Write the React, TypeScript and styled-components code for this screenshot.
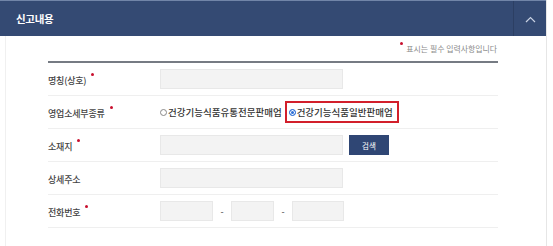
import styled, { createGlobalStyle } from 'styled-components';

const GlobalStyle = createGlobalStyle`
  html, body {
    margin: 0;
    padding: 0;
    background: #fff;
  }
  body {
    font-family: "Noto Sans CJK KR", "Noto Sans", sans-serif;
  }
`;

export default function App() {
  return (
    <>
      <GlobalStyle />
      <Card>
        <Header>
          <Title>신고내용</Title>
          <Toggle>
            <svg width="11" height="7" viewBox="0 0 11 7">
              <path d="M1 6 L5.5 1.5 L10 6" fill="none" stroke="#c9d2e3" strokeWidth="1.2" />
            </svg>
          </Toggle>
        </Header>
        <Body>
          <Note>
            <Star $note />표시는 필수 입력사항입니다
          </Note>
          <Table>
            <Row>
              <Label>명칭(상호)<Star /></Label>
              <Field>
                <Input $w={183} />
              </Field>
            </Row>
            <Row>
              <Label>영업소세부종류<Star /></Label>
              <Field>
                <Radio>
                  <Dot />건강기능식품유통전문판매업
                </Radio>
                <Radio $checked>
                  <Dot $checked />건강기능식품일반판매업
                </Radio>
              </Field>
            </Row>
            <Row>
              <Label>소재지<Star /></Label>
              <Field>
                <Input $w={183} />
                <SearchButton>검색</SearchButton>
              </Field>
            </Row>
            <Row>
              <Label>상세주소</Label>
              <Field>
                <Input $w={183} />
              </Field>
            </Row>
            <Row>
              <Label>전화번호<Star /></Label>
              <Field>
                <Input $w={53} />
                <Dash>-</Dash>
                <Input $w={43} />
                <Dash>-</Dash>
                <Input $w={52} />
              </Field>
            </Row>
          </Table>
        </Body>
      </Card>
    </>
  );
}

const Card = styled.div`
  width: 547px;
  height: 246px;
  border-right: 1px solid #e6e6e6;
  box-sizing: border-box;
`;

const Header = styled.div`
  display: flex;
  align-items: stretch;
  height: 36px;
  background: #344a73;
  border-top: 1px solid #7185a8;
  box-sizing: border-box;
`;

const Title = styled.h2`
  flex: 1;
  margin: 0;
  padding-left: 16px;
  display: flex;
  align-items: center;
  color: #fff;
  font-size: 10.5px;
  font-weight: 700;
  letter-spacing: -0.3px;
`;

const Toggle = styled.div`
  width: 32px;
  display: flex;
  align-items: center;
  justify-content: center;
  border-left: 1px solid #2c3f63;
  padding-top: 1px;
`;

const Body = styled.div`
  margin-left: 5px;
  border-left: 1px solid #f0f0f0;
  padding: 0 48px 0 42px;
  height: 210px;
  box-sizing: border-box;
`;

const Note = styled.div`
  height: 25px;
  display: flex;
  align-items: center;
  justify-content: flex-end;
  padding-right: 1px;
  font-size: 7.9px;
  color: #8a8a8a;
`;

const Star = styled.span<{ $note?: boolean }>`
  display: inline-block;
  width: 3px;
  height: 3px;
  border-radius: 50%;
  background: #c8102e;
  margin: ${(p) => (p.$note ? '0 3px 0 0' : '0 0 0 5px')};
  position: relative;
  top: ${(p) => (p.$note ? '-5px' : '-8px')};
`;

const Table = styled.div`
  border-top: 2px solid #767b83;
`;

const Row = styled.div`
  display: flex;
  align-items: center;
  height: 33px;
  border-bottom: 1px solid #efefef;
  box-sizing: border-box;
`;

const Label = styled.div`
  width: 112px;
  flex-shrink: 0;
  font-size: 9px;
  font-weight: 500;
  color: #444;
  letter-spacing: -0.2px;
  padding-top: 2px;
`;

const Field = styled.div`
  display: flex;
  align-items: center;
`;

const Input = styled.div<{ $w: number }>`
  width: ${(p) => p.$w}px;
  height: 20px;
  background: #f3f3f3;
  border: 1px solid #e8e8e8;
  box-sizing: border-box;
`;

const Dash = styled.span`
  width: 18px;
  text-align: center;
  font-size: 9px;
  color: #444;
`;

const Radio = styled.label<{ $checked?: boolean }>`
  display: flex;
  align-items: center;
  font-size: 9.5px;
  font-weight: 500;
  color: #333;
  height: 22px;
  box-sizing: border-box;
  margin-left: ${(p) => (p.$checked ? '3px' : '0')};
  padding: ${(p) => (p.$checked ? '0 4px 0 2px' : '0')};
  border: ${(p) => (p.$checked ? '2px solid #d21f2b' : 'none')};
`;

const Dot = styled.span<{ $checked?: boolean }>`
  width: 7px;
  height: 7px;
  border-radius: 50%;
  box-sizing: border-box;
  margin-right: 1px;
  border: 1px solid ${(p) => (p.$checked ? '#2d6fd6' : '#888')};
  background: ${(p) => (p.$checked ? '#2d6fd6' : '#fff')};
  box-shadow: ${(p) => (p.$checked ? 'inset 0 0 0 1px #fff' : 'none')};
`;

const SearchButton = styled.button`
  margin-left: 6px;
  width: 40px;
  height: 20px;
  border: none;
  background: #2f4674;
  color: #fff;
  font-family: inherit;
  font-size: 7.5px;
  padding: 0;
`;
